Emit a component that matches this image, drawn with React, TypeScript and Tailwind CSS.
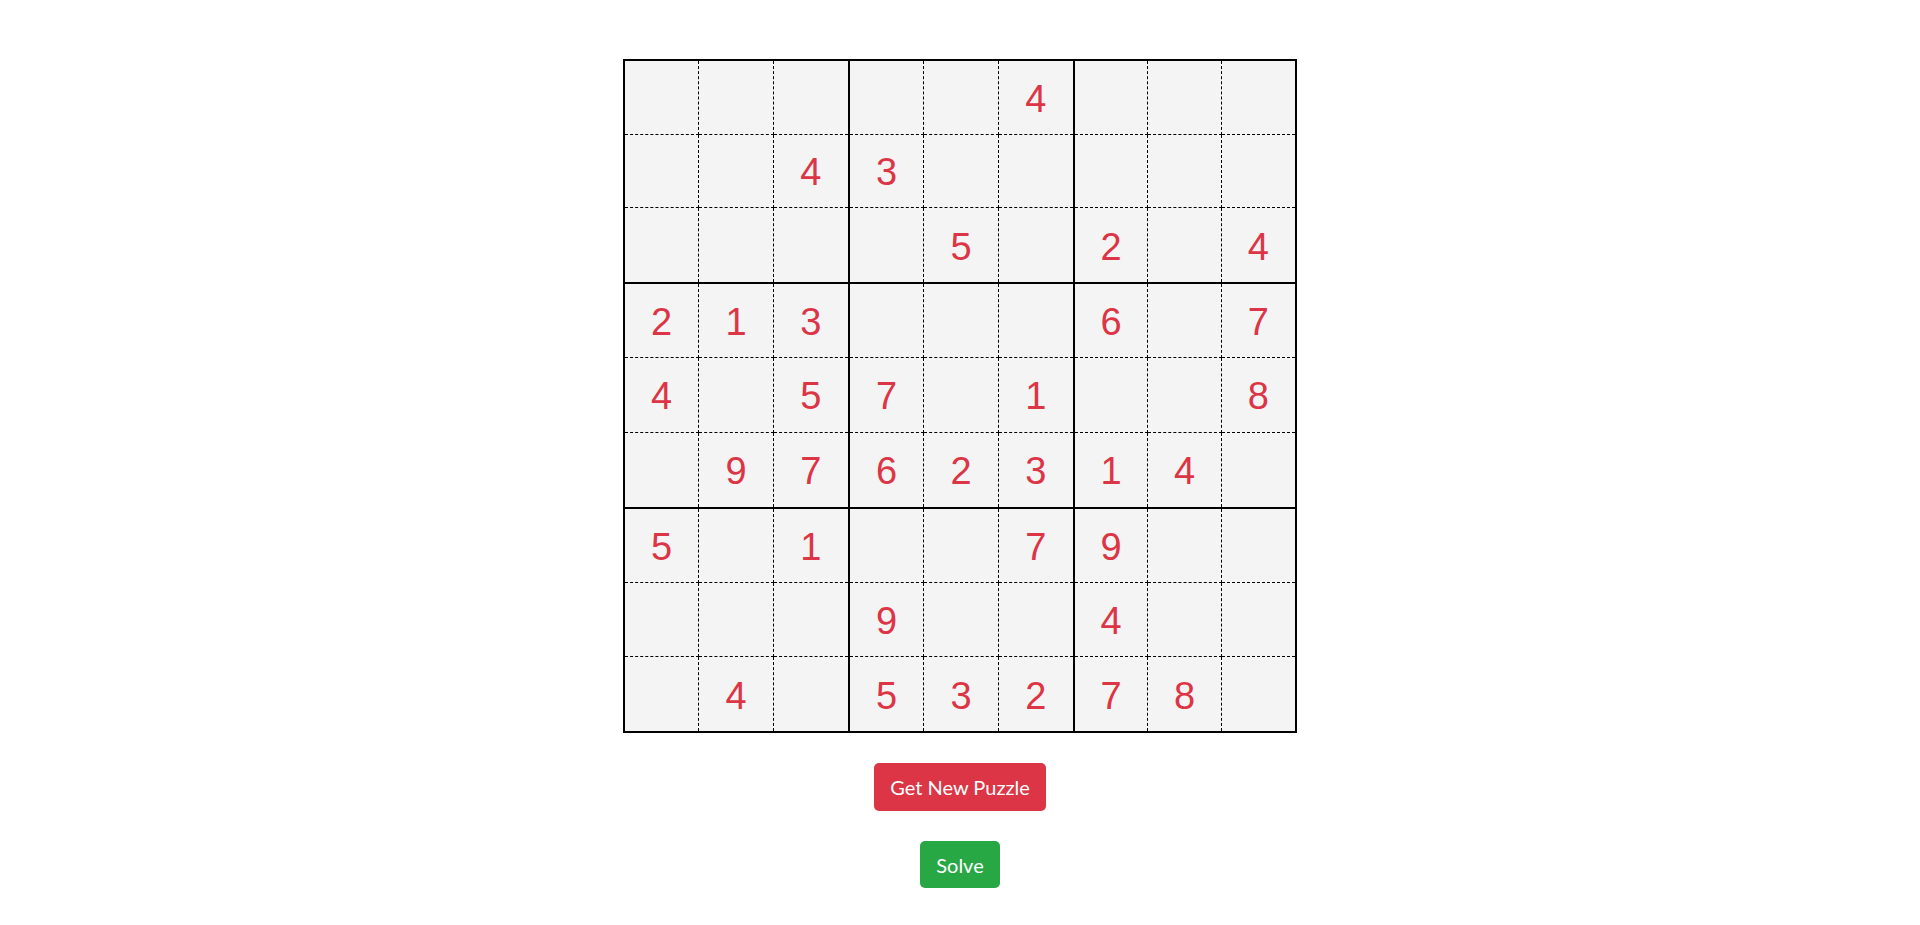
import React, { useState } from 'react';

type Board = (number | null)[][];

const puzzle: Board = [
  [null, null, null, null, null, 4, null, null, null],
  [null, null, 4, 3, null, null, null, null, null],
  [null, null, null, null, 5, null, 2, null, 4],
  [2, 1, 3, null, null, null, 6, null, 7],
  [4, null, 5, 7, null, 1, null, null, 8],
  [null, 9, 7, 6, 2, 3, 1, 4, null],
  [5, null, 1, null, null, 7, 9, null, null],
  [null, null, null, 9, null, null, 4, null, null],
  [null, 4, null, 5, 3, 2, 7, 8, null],
];

// 3x3 box with solid edges, holding 3x3 cells split by dashed lines
const Box: React.FC<{ board: Board; br: number; bc: number }> = ({ board, br, bc }) => {
  const cells = [];
  for (let r = 0; r < 3; r++) {
    for (let c = 0; c < 3; c++) {
      const value = board[br * 3 + r][bc * 3 + c];
      const right = c < 2 ? 'border-r border-dashed border-black' : '';
      const bottom = r < 2 ? 'border-b border-dashed border-black' : '';
      cells.push(
        <div
          key={`${r}-${c}`}
          className={`flex items-center justify-center pt-[3px] text-[38px] leading-none text-[#dc3545] ${right} ${bottom}`}
        >
          {value ?? ''}
        </div>
      );
    }
  }
  return <div className="grid grid-cols-3 grid-rows-3 h-full">{cells}</div>;
};

const App: React.FC = () => {
  const [board] = useState<Board>(puzzle);

  const boxes = [];
  for (let br = 0; br < 3; br++) {
    for (let bc = 0; bc < 3; bc++) {
      const right = bc < 2 ? 'border-r-2 border-black' : '';
      const bottom = br < 2 ? 'border-b-2 border-black' : '';
      boxes.push(
        <div key={`${br}-${bc}`} className={`${right} ${bottom}`}>
          <Box board={board} br={br} bc={bc} />
        </div>
      );
    }
  }

  return (
    <div className="min-h-screen bg-white flex flex-col items-center pt-[59px] font-['Liberation_Sans',Arial,sans-serif]">
      {/* Board */}
      <div className="w-[674px] h-[674px] border-2 border-black bg-[#f4f4f4] grid grid-cols-[225px_225px_220px] grid-rows-[223px_225px_222px]">
        {boxes}
      </div>

      {/* Controls */}
      <button className="mt-[30px] h-[48px] px-4 rounded-[5px] bg-[#dc3545] text-white text-[20px] leading-[30px] font-['Segoe_UI',Lato,sans-serif]">
        Get New Puzzle
      </button>
      <button className="mt-[30px] h-[47px] px-4 rounded-[5px] bg-[#28a745] text-white text-[20px] leading-[30px] font-['Segoe_UI',Lato,sans-serif]">
        Solve
      </button>
    </div>
  );
};

export default App;
